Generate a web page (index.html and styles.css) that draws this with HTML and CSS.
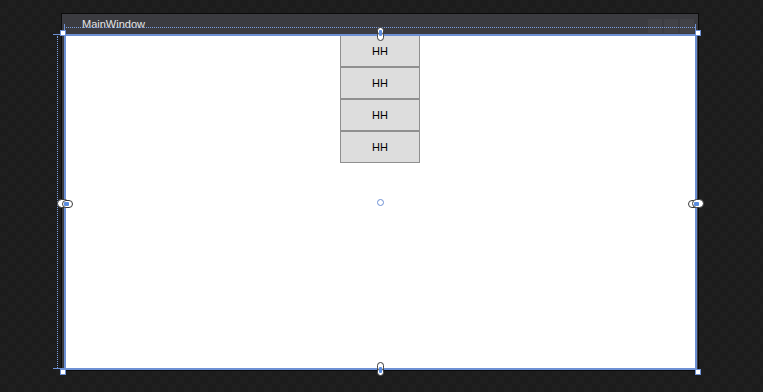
FILE: index.html
```html
<!DOCTYPE html>
<html>
<head>
<meta charset="utf-8">
<link rel="stylesheet" href="styles.css">
</head>
<body>
<div class="window">
  <div class="titlebar">
    <span class="title">MainWindow</span>
    <div class="caps"><span class="cap"></span><span class="cap"></span><span class="cap"></span></div>
  </div>
  <div class="client">
    <div class="stack">
      <div class="btn">HH</div>
      <div class="btn">HH</div>
      <div class="btn">HH</div>
      <div class="btn">HH</div>
    </div>
  </div>

  <div class="dot-h"></div>
  <div class="dot-v"></div>
  <div class="sel"></div>
  <div class="ext ext-h1"></div>
  <div class="ext ext-h2"></div>
  <div class="ext ext-v1"></div>
  <div class="ext ext-v2"></div>
  <div class="handle h-tl"></div>
  <div class="handle h-tr"></div>
  <div class="handle h-bl"></div>
  <div class="handle h-br"></div>
  <div class="center-dot"></div>

  <svg class="anchor a-top" width="7" height="14" viewBox="0 0 7 14">
    <rect x="0.5" y="0.5" width="6" height="10" rx="3" fill="#fff" stroke="#3a3a3a"/>
    <rect x="0.5" y="5.5" width="6" height="8" rx="3" fill="#fff" stroke="#3a3a3a"/>
    <rect x="2" y="3" width="3" height="6" rx="1" fill="#5b8de0"/>
  </svg>
  <svg class="anchor a-bottom" width="7" height="14" viewBox="0 0 7 14">
    <rect x="0.5" y="3.5" width="6" height="10" rx="3" fill="#fff" stroke="#3a3a3a"/>
    <rect x="0.5" y="0.5" width="6" height="8" rx="3" fill="#fff" stroke="#3a3a3a"/>
    <rect x="2" y="5" width="3" height="6" rx="1" fill="#5b8de0"/>
  </svg>
  <svg class="anchor a-left" width="16" height="11" viewBox="0 0 16 11">
    <rect x="0.5" y="1.5" width="11" height="8" rx="4" fill="#fff" stroke="#3a3a3a"/>
    <rect x="5.5" y="2.5" width="10" height="7" rx="3.5" fill="#fff" stroke="#3a3a3a"/>
    <rect x="7" y="4" width="5" height="4" rx="1" fill="#5b8de0"/>
  </svg>
  <svg class="anchor a-right" width="16" height="11" viewBox="0 0 16 11">
    <rect x="0.5" y="2.5" width="11" height="7" rx="3.5" fill="#fff" stroke="#3a3a3a"/>
    <rect x="4.5" y="1.5" width="11" height="8" rx="4" fill="#fff" stroke="#3a3a3a"/>
    <rect x="6" y="4" width="5" height="4" rx="1" fill="#5b8de0"/>
  </svg>
</div>
</body>
</html>
```
FILE: styles.css
```css
html, body {
  margin: 0;
  height: 100%;
}
body {
  width: 763px;
  height: 392px;
  box-sizing: border-box;
  padding: 13px 0 0 61px;
  overflow: hidden;
  background: conic-gradient(#1f1f1f 25%, #1c1c1c 0 50%, #1f1f1f 0 75%, #1c1c1c 0) 0 0 / 16px 16px;
  font-family: "Liberation Sans", Arial, sans-serif;
}
.window {
  position: relative;
  width: 638px;
  height: 358px;
  box-sizing: border-box;
  border: 1px solid #0b0b0b;
  background: #3b3b40;
  padding: 0 3px 2px 4px;
  display: flex;
  flex-direction: column;
}
.titlebar {
  height: 21px;
  display: flex;
  align-items: flex-start;
  justify-content: space-between;
  flex: none;
}
.title {
  margin: 4px 0 0 16px;
  font-size: 11px;
  line-height: 13px;
  color: #e6e6e6;
}
.caps {
  display: flex;
  gap: 2px;
  margin-top: 5px;
  margin-right: 1px;
}
.cap {
  width: 14px;
  height: 14px;
  background: #424247;
}
.client {
  flex: 1;
  background: #ffffff;
}
.stack {
  display: flex;
  flex-direction: column;
  align-items: center;
  padding-right: 1px;
}
.btn {
  width: 80px;
  height: 32px;
  box-sizing: border-box;
  border: 1px solid #8f8f8f;
  background: #dddddd;
  color: #000;
  font-size: 11px;
  display: flex;
  align-items: center;
  justify-content: center;
}

/* designer adorners */
.sel {
  position: absolute;
  left: 2px;
  top: 20px;
  width: 633px;
  height: 336px;
  box-sizing: border-box;
  border: 2px solid #6d90d4;
}
.ext {
  position: absolute;
  background: #6d90d4;
}
.ext-h1 { left: -9px; top: 20px; width: 11px; height: 1px; }
.ext-h2 { left: -9px; top: 354px; width: 11px; height: 1px; }
.ext-v1 { left: 2px; top: 10px; width: 1px; height: 10px; }
.ext-v2 { left: 633px; top: 10px; width: 1px; height: 10px; }
.dot-h {
  position: absolute;
  left: 4px;
  top: 13px;
  width: 629px;
  border-top: 1px dotted #7a9ee0;
}
.dot-v {
  position: absolute;
  left: -5px;
  top: 22px;
  height: 332px;
  border-left: 1px dotted #7a9ee0;
}
.handle {
  position: absolute;
  width: 6px;
  height: 6px;
  box-sizing: border-box;
  border: 1px solid #6d90d4;
  background: #ffffff;
}
.h-tl { left: -2px; top: 16px; }
.h-tr { left: 633px; top: 16px; }
.h-bl { left: -2px; top: 355px; }
.h-br { left: 633px; top: 355px; }
.center-dot {
  position: absolute;
  left: 315px;
  top: 185px;
  width: 7px;
  height: 7px;
  box-sizing: border-box;
  border: 1px solid #6d90d4;
  border-radius: 50%;
}
.anchor {
  position: absolute;
  display: block;
}
.a-top { left: 315px; top: 13px; }
.a-bottom { left: 315px; top: 348px; }
.a-left { left: -5px; top: 184px; }
.a-right { left: 626px; top: 184px; }
```
